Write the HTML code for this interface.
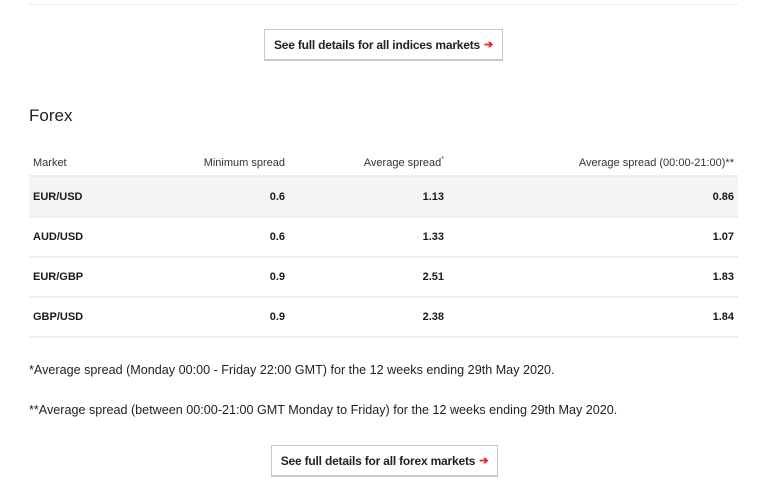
<!DOCTYPE html>
<html><head><meta charset="utf-8"><style>
*{margin:0;padding:0;box-sizing:border-box}
body{width:768px;height:499px;background:#fff;font-family:"Liberation Sans",sans-serif;color:#1a1a1a;position:relative;overflow:hidden}
.abs{position:absolute}
.btn{position:absolute;border:1px solid #c8c8cc;border-bottom:2px solid #c8c8cc;background:#fff;font-size:12px;font-weight:bold;color:#222;display:flex;align-items:center;justify-content:center;letter-spacing:-0.2px}
.btn span{color:#e4222e;margin-left:4px;font-size:11px}
.line{position:absolute;left:29px;width:709px;height:2px;background:#ececee}
.row{position:absolute;left:29px;width:709px;height:40px;font-size:11px}
.row div{position:absolute;top:0;line-height:40px}
.c1{left:4px}.c2{right:453px}.c3{right:294px}.c4{right:4px}
.fn{position:absolute;left:29px;font-size:12.6px;color:#222}
.s{position:relative;top:-5px;font-size:7px}
</style></head><body>
<div class="line" style="top:4px;height:1px"></div>
<div class="btn" style="left:264px;top:29px;width:239px;height:32px">See full details for all indices markets<span>➔</span></div>
<div class="abs" style="left:29px;top:106px;font-size:17px;color:#222">Forex</div>
<div class="row" style="top:143px;color:#333"><div class="c1">Market</div><div class="c2">Minimum spread</div><div class="c3">Average spread<span class="s">*</span></div><div class="c4">Average spread (00:00-21:00)**</div></div>
<div class="line" style="top:175px"></div>
<div class="row" style="top:177px;background:#f5f5f7;font-weight:bold"><div class="c1">EUR/USD</div><div class="c2">0.6</div><div class="c3">1.13</div><div class="c4">0.86</div></div>
<div class="line" style="top:216px"></div>
<div class="row" style="top:217px;font-weight:bold"><div class="c1">AUD/USD</div><div class="c2">0.6</div><div class="c3">1.33</div><div class="c4">1.07</div></div>
<div class="line" style="top:256px"></div>
<div class="row" style="top:257px;font-weight:bold"><div class="c1">EUR/GBP</div><div class="c2">0.9</div><div class="c3">2.51</div><div class="c4">1.83</div></div>
<div class="line" style="top:296px"></div>
<div class="row" style="top:297px;font-weight:bold"><div class="c1">GBP/USD</div><div class="c2">0.9</div><div class="c3">2.38</div><div class="c4">1.84</div></div>
<div class="line" style="top:336px"></div>
<div class="fn" style="top:363px">*Average spread (Monday 00:00 - Friday 22:00 GMT) for the 12 weeks ending 29th May 2020.</div>
<div class="fn" style="top:403px">**Average spread (between 00:00-21:00 GMT Monday to Friday) for the 12 weeks ending 29th May 2020.</div>
<div class="btn" style="left:271px;top:445px;width:227px;height:32px">See full details for all forex markets<span>➔</span></div>
</body></html>
